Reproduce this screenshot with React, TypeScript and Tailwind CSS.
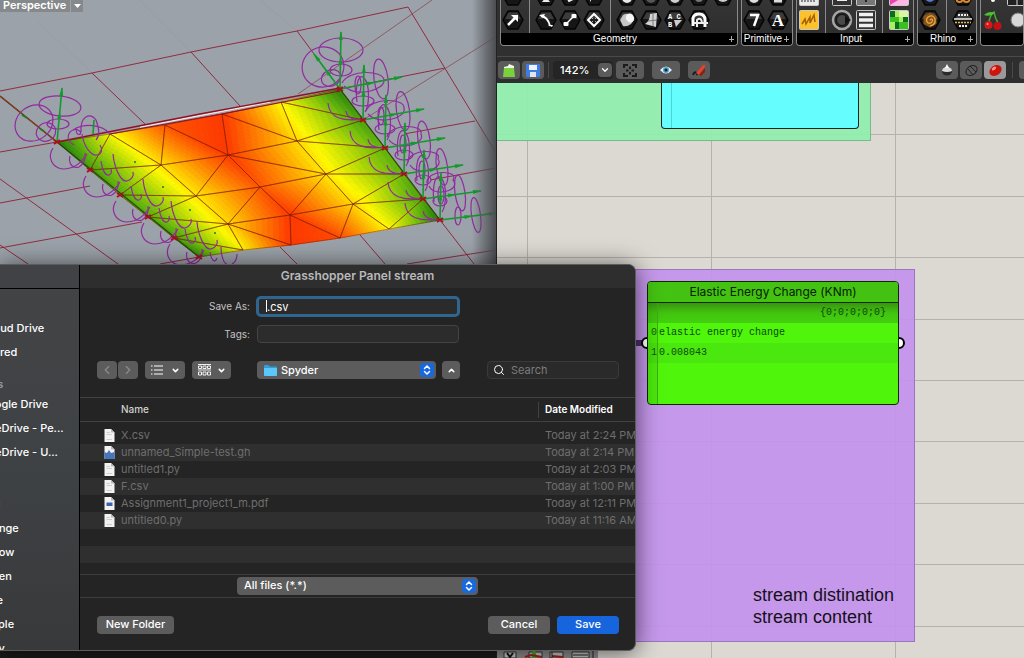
import { useState } from "react";
import type { ReactNode } from "react";
import { LuChevronDown, LuChevronLeft, LuChevronRight, LuChevronUp, LuChevronsUpDown, LuSearch } from "react-icons/lu";

type Point = [number, number];
type Vertex = { at: Point; value: number };

// Mesh vertices with their normalised energy value
const vertices: Record<string, Vertex> = {
    T0: { at: [57, 142], value: 0 },
    T1: { at: [110, 134], value: 0.48 },
    T2: { at: [165, 125], value: 0.92 },
    T3: { at: [222, 114], value: 1 },
    T4: { at: [281, 102], value: 0.5 },
    T5: { at: [340, 89], value: 0.03 },
    L1: { at: [90, 170], value: 0.1 },
    L2: { at: [120, 195], value: 0.14 },
    L3: { at: [148, 217], value: 0.14 },
    L4: { at: [174, 238], value: 0.1 },
    L5: { at: [199, 257], value: 0.05 },
    E1: { at: [363, 120], value: 0.12 },
    E2: { at: [385, 148], value: 0.18 },
    E3: { at: [404, 174], value: 0.18 },
    E4: { at: [423, 199], value: 0.12 },
    E5: { at: [440, 220], value: 0 },
    P1: { at: [161, 165], value: 0.56 },
    P2: { at: [196, 196], value: 0.54 },
    P3: { at: [228, 224], value: 0.58 },
    Q1: { at: [228, 155], value: 1 },
    Q2: { at: [260, 187], value: 0.92 },
    Q3: { at: [290, 215], value: 1 },
    R1: { at: [297, 141], value: 0.58 },
    R2: { at: [326, 174], value: 0.54 },
    R3: { at: [353, 204], value: 0.58 },
    B1: { at: [243, 250], value: 0.5 },
    B2: { at: [291, 245], value: 1 },
    B3: { at: [340, 238], value: 0.95 },
    B4: { at: [389, 229], value: 0.5 },
};

const triangles = [
    "T0 T1 L1", "T1 P1 L1", "T1 T2 P1", "T2 Q1 P1", "T2 T3 Q1", "T3 R1 Q1", "T3 T4 R1", "T4 E1 R1", "T4 T5 E1",
    "L1 P1 L2", "P1 P2 L2", "P1 Q1 P2", "Q1 Q2 P2", "Q1 R2 Q2", "Q1 R1 R2", "R1 E2 R2", "R1 E1 E2",
    "L2 P2 L3", "L3 P2 P3", "P2 Q2 P3", "Q2 Q3 P3", "Q2 R2 Q3", "R2 R3 Q3", "R2 E3 R3", "R2 E2 E3",
    "L3 P3 L4", "L4 P3 B1", "L4 B1 L5", "P3 B2 B1", "P3 Q3 B2", "Q3 B3 B2", "Q3 R3 B3", "R3 B4 B3",
    "R3 E4 B4", "R3 E3 E4", "E4 E5 B4",
].map((names) => names.split(" ").map((name) => vertices[name]));

const ramp: [number, number, number, number][] = [
    [0, 30, 122, 12],
    [0.2, 104, 184, 12],
    [0.5, 255, 250, 0],
    [0.75, 255, 148, 0],
    [1, 255, 56, 0],
];

function rampColor(value: number) {
    const v = Math.min(1, Math.max(0, value));
    const i = Math.max(1, ramp.findIndex((stop) => stop[0] >= v));
    const a = ramp[i - 1];
    const b = ramp[i];
    const t = (v - a[0]) / (b[0] - a[0]);
    const mix = (k: number) => Math.round(a[k] + (b[k] - a[k]) * t);
    return `rgb(${mix(1)},${mix(2)},${mix(3)})`;
}

const STEPS = 11;

function shadeTriangle(tri: Vertex[]) {
    const point = (i: number, j: number) => {
        const u = i / STEPS;
        const v = j / STEPS;
        const w = 1 - u - v;
        const mix = (a: number, b: number, c: number) => a * w + b * u + c * v;
        return {
            x: mix(tri[0].at[0], tri[1].at[0], tri[2].at[0]),
            y: mix(tri[0].at[1], tri[1].at[1], tri[2].at[1]),
            value: mix(tri[0].value, tri[1].value, tri[2].value),
        };
    };
    const cells: { points: string; color: string }[] = [];
    const add = (list: ReturnType<typeof point>[]) =>
        cells.push({
            points: list.map((p) => `${p.x.toFixed(1)},${p.y.toFixed(1)}`).join(" "),
            color: rampColor(list.reduce((sum, p) => sum + p.value, 0) / 3),
        });
    for (let i = 0; i < STEPS; i++) {
        for (let j = 0; j < STEPS - i; j++) {
            add([point(i, j), point(i + 1, j), point(i, j + 1)]);
            if (i + j < STEPS - 1) add([point(i + 1, j), point(i + 1, j + 1), point(i, j + 1)]);
        }
    }
    return cells;
}

const cells = triangles.flatMap(shadeTriangle);

const leftSupports: Point[] = ["T0", "L1", "L2", "L3", "L4", "L5"].map((n) => vertices[n].at);
const rightSupports: Point[] = ["T5", "E1", "E2", "E3", "E4", "E5"].map((n) => vertices[n].at);

function Arrow({ from, to }: { from: Point; to: Point }) {
    const angle = (Math.atan2(to[1] - from[1], to[0] - from[0]) * 180) / Math.PI;
    return (
        <g stroke="#149a2c" fill="#149a2c">
            <path d={`M${from[0]} ${from[1]}L${to[0]} ${to[1]}`} strokeWidth="1.6" />
            <path d="M1 0L-8 -2V2Z" stroke="none" transform={`translate(${to[0]} ${to[1]}) rotate(${angle})`} />
            <path d="M4 0L-4 -2V2Z" stroke="none" transform={`translate(${(from[0] + to[0]) / 2} ${(from[1] + to[1]) / 2}) rotate(${angle})`} />
        </g>
    );
}

function Viewport() {
    return (
        <section className="relative flex-1 overflow-hidden bg-[#9ba2a9]">
            <svg width="497" height="264" viewBox="0 0 497 264" fill="none" className="block">
                <g stroke="#939ba2" strokeWidth="0.6">
                    <path d="M38 22L92 73M140 0L191 52M260 0L297 31" />
                </g>
                <g stroke="#8d1f36" strokeWidth="0.9">
                    <path d="M0 91L92 73L191 52L297 31L408 7L496 153M92 73L146 125M191 52L240 106M297 31L340 89" />
                    <path d="M0 152L57 142M0 203L90 186M0 248L142 222M0 179L118 264M0 245L28 264M160 264L199 257" />
                    <path d="M280 247L297 264M360 235L385 264M440 220L474 264M407 264L496 250" />
                    <path d="M340 89L445 68M404 134L475 121M430 180L496 168" />
                </g>
                <path d="M298 94L432 0M363 120L497 36" stroke="#8a4a56" strokeWidth="0.8" />
                <path d="M0 96L57 142" stroke="#8c1712" strokeWidth="1.6" />

                <g strokeWidth="0.7">
                    {cells.map((cell, i) => (
                        <polygon key={i} points={cell.points} fill={cell.color} stroke={cell.color} />
                    ))}
                </g>
                <g stroke="#7a1c06" strokeWidth="0.6" strokeOpacity="0.8">
                    {triangles.map((tri, i) => (
                        <polygon key={i} points={tri.map((v) => v.at.join(",")).join(" ")} />
                    ))}
                </g>
                <path d="M57 142L199 257M340 89L440 220" stroke="#24480c" strokeWidth="1.2" />
                <path d="M140 127L270 102" stroke="#f6e4e4" strokeWidth="1.4" />
                <path d="M57 142L200 114L340 88" stroke="#8d1226" strokeWidth="1.4" />
                <path d="M110 134L222 114L340 91" stroke="#8d1226" strokeWidth="1.2" />

                {/* moments on the left supports */}
                <g stroke="#922aa0" strokeWidth="1.2">
                    <ellipse cx="60" cy="106" rx="21" ry="10" transform="rotate(6 60 106)" />
                    <ellipse cx="34" cy="123" rx="20" ry="17" transform="rotate(-38 34 123)" />
                    <ellipse cx="58" cy="124" rx="11" ry="5" />
                    <ellipse cx="46" cy="132" rx="10" ry="9" transform="rotate(-30 46 132)" />
                    <path d="M74 145C64 140 68 128 78 130C86 134 74 138 77 129M81 132C80 116 90 112 96 120C99 128 100 136 96 140M73 130C84 123 102 124 110 134" />
                    <path d="M82 134C84 148 92 156 97 155C103 154 102 148 100 145" />
                    {leftSupports.slice(0, 5).map(([x, y], i) => (
                        <g key={i} transform={`translate(${x} ${y})`}>
                            <path d="M-4 6C-10 15 -5 26 6 27C17 27 25 20 30 12" />
                            <path d="M13 14C11 22 16 27 22 25C27 22 29 16 28 11" />
                        </g>
                    ))}
                    {leftSupports.slice(1, 5).map(([x, y], i) => (
                        <g key={i} transform={`translate(${x} ${y})`}>
                            <path d="M23 -16C24 -4 30 12 37 11C42 10 44 5 43 2" />
                            <path d="M11 -9C12 -1 15 6 19 5C21 4 22 2 21 -1" />
                        </g>
                    ))}
                    <path d="M221 247C221 256 224 264 227 264M210 252C211 260 215 264 217 258M232 264C236 262 237 258 237 254" />
                </g>
                <path d="M57 142L0 96" stroke="#50641c" strokeWidth="0.8" />
                <Arrow from={[57, 142]} to={[62, 88]} />
                <path d="M93 134L94 120" stroke="#149a2c" strokeWidth="1.6" />
                <path d="M22 115L27 118M40 129L44 131M134 162h2M162 187h2M189 210h2M214 233h2" stroke="#197f22" strokeWidth="1.5" />

                {/* reactions and moments on the right supports */}
                <g stroke="#922aa0" strokeWidth="1.2">
                    <ellipse cx="341" cy="50" rx="22" ry="12" />
                    <ellipse cx="323" cy="67" rx="21" ry="20" transform="rotate(-20 323 67)" />
                    <ellipse cx="341" cy="70" rx="11" ry="6" />
                    <ellipse cx="331" cy="78" rx="10" ry="8" transform="rotate(-25 331 78)" />
                    {rightSupports.map(([x, y], i) => (
                        <g key={i} transform={`translate(${x} ${y})`}>
                            <ellipse cx={41 - i} cy={-10 + i} rx={7 - i / 2} ry={20 - i / 2} transform={`rotate(-8 ${41 - i} ${-10 + i})`} />
                            <ellipse cx="18" cy="-4" rx="3" ry="9" />
                        </g>
                    ))}
                    {rightSupports.slice(1).map(([x, y], i) => (
                        <g key={i} transform={`translate(${x} ${y})`}>
                            <ellipse cx="0" cy="-19" rx={11 - i} ry="5" />
                            <path d={`M${-21 + i * 2} -37C-14 -51 20 -50 ${21 - i * 2} -40C22 -30 -6 -22 ${-19 + i * 2} -34`} />
                            <path d="M-6 -18C-8 -32 -5 -46 0 -43C8 -36 6 -14 2 -8" />
                            <path d="M-35 -17C-34 -2 -20 2 0 -1M-17 -9C-16 -2 -8 1 0 -1" />
                        </g>
                    ))}
                </g>
                {rightSupports.map(([x, y], i) => (
                    <g key={i}>
                        <Arrow from={[x, y]} to={[x + 1, y - 57 + i * 2]} />
                        <Arrow from={[x, y]} to={[x + 62 - i, y - 12 + i]} />
                    </g>
                ))}
                <Arrow from={[340, 89]} to={[314, 54]} />

                {[...leftSupports, ...rightSupports].map(([x, y], i) => (
                    <path key={i} d={`M${x - 3} ${y - 2}l6 4m0 -4l-6 4`} stroke="#a5121a" strokeWidth="2" />
                ))}
            </svg>
            <div className="absolute inset-y-0 right-0 w-6 bg-linear-to-r from-transparent to-[#4a4c50]" />
            <div className="absolute top-0 left-0 flex h-3 items-center gap-px text-white">
                <span className="flex h-full items-center bg-[#86898c] pr-1 pb-px pl-[3px] text-[11px] leading-none font-semibold">Perspective</span>
                <button type="button" aria-label="Viewport menu" className="flex h-full w-3 items-center justify-center bg-[#86898c]">
                    <svg width="7" height="4" viewBox="0 0 7 4"><path d="M0 0H7L3.5 4Z" fill="#fff" /></svg>
                </button>
            </div>
        </section>
    );
}

function Hex({ children }: { children?: ReactNode }) {
    return (
        <svg width="24" height="24" viewBox="0 0 24 24" fill="none">
            <path d="M7 3H17L22 12L17 21H7L2 12Z" fill="#161616" stroke="#050505" strokeWidth="1.500" strokeLinejoin="round" />
            <path d="M7.500 4.500H16.500L20 11H4Z" fill="#3b3b3b" />
            {children}
        </svg>
    );
}

function Tile({ color, children }: { color: string; children?: ReactNode }) {
    return (
        <svg width="24" height="24" viewBox="0 0 24 24" fill="none">
            <rect x="2.500" y="2.500" width="19" height="19" rx="1" fill={color} stroke="#c9c9c9" />
            {children}
        </svg>
    );
}

type Column = { top: ReactNode; bottom: ReactNode } | null;

const geometryColumns: Column[] = [
    { top: <Hex />, bottom: <Hex><path d="M7 17L14 10" stroke="#fff" strokeWidth="2.500" /><path d="M10 7H17V14Z" fill="#fff" /></Hex> },
    null,
    { top: <Hex><path d="M8 18Q12 12 16 18" fill="#eee" /></Hex>, bottom: <Hex><path d="M7 8Q14 9 16 18" stroke="#fff" strokeWidth="2" /><path d="M5 7l6-1-2 4zM14 17h5l-1 2z" fill="#fff" /></Hex> },
    { top: <Hex><path d="M10 17l6-3" stroke="#eee" strokeWidth="3" /></Hex>, bottom: <Hex><path d="M8 16L16 8" stroke="#fff" strokeWidth="1.500" /><rect x="5.500" y="14" width="5" height="4" rx="1" fill="#fff" /><rect x="13.500" y="6" width="5" height="4" rx="1" fill="#fff" /></Hex> },
    { top: <Hex><path d="M8 18V13h3z" fill="#eee" /></Hex>, bottom: <Hex><path d="M12 6L18 12L12 18L6 12Z" stroke="#fff" strokeWidth="2" /><path d="M9 15L15 9M9 9L15 15" stroke="#ddd" /><rect x="10.500" y="10.500" width="3" height="3" fill="#222" /></Hex> },
    null,
    { top: <Hex><circle cx="12" cy="14" r="5" fill="#e8e8e8" /></Hex>, bottom: <Hex><path d="M5 12L8 7Q11 5 14 6Q19 8 19 12L16 16Q12 19 8 18Z" fill="#c5c5c5" /><ellipse cx="15" cy="10" rx="4" ry="4.500" fill="#f5f5f5" transform="rotate(-30 15 10)" /></Hex> },
    { top: <Hex><circle cx="12" cy="14" r="5" fill="#555" /></Hex>, bottom: <Hex><path d="M11 6L18 5L17 19L6 16Q11 13 11 6Z" fill="#d2d2d2" /><path d="M14 6V18M9 13L18 12" stroke="#777" /></Hex> },
    { top: <Hex><circle cx="12" cy="14" r="5" fill="#d0d0d0" /></Hex>, bottom: <Hex><text x="5" y="11" fontSize="7" fontWeight="700" fill="#fff" className="font-['Liberation_Mono']">A C</text><text x="5" y="19" fontSize="7" fontWeight="700" fill="#fff" className="font-['Liberation_Mono']">B</text><path d="M11 12H19L13 19Z" fill="#ccc" /></Hex> },
    { top: <Hex><circle cx="12" cy="14" r="4" fill="#777" /></Hex>, bottom: <Hex><path d="M6 18V10Q7 6 12 6Q18 6 18 12V19" stroke="#fff" strokeWidth="3" /><path d="M10 19V12Q14 9 15 14M7 15H21" stroke="#eee" strokeWidth="2" /></Hex> },
    { top: <Hex><circle cx="12" cy="12" r="6" fill="#ccc" /></Hex>, bottom: null },
];

const primitiveColumns: Column[] = [
    { top: <Hex><circle cx="12" cy="14" r="5" fill="#ddd" /></Hex>, bottom: <Hex><path d="M8 7H16L12 18" stroke="#fff" strokeWidth="2.500" /></Hex> },
    { top: <Hex><path d="M8 17h8" stroke="#ddd" strokeWidth="3" /></Hex>, bottom: <Hex><text x="12" y="18" textAnchor="middle" fontSize="17" fontWeight="700" fill="#fff" className="font-['Liberation_Serif']">A</text></Hex> },
];

const inputColumns: Column[] = [
    { top: <Tile color="#eaeaea"><path d="M5 18V14M8 18V15M11 18V14M14 18V15M17 18V14" stroke="#222" /></Tile>, bottom: <Tile color="#fbc22c"><path d="M5 16L8 11L9 16L13 9L13 15L17 7L18 14" stroke="#a65c00" strokeWidth="1.500" /></Tile> },
    null,
    { top: <Tile color="#333"><rect x="7" y="8" width="10" height="9" fill="#eee" /></Tile>, bottom: <svg width="24" height="24" viewBox="0 0 24 24" fill="none"><circle cx="12" cy="12" r="9" fill="#222" stroke="#a6a6a6" strokeWidth="2.500" /><circle cx="12" cy="12" r="5.500" fill="#4a4a4a" stroke="#111" /><path d="M15 8l6 4-6 4z" fill="#111" /></svg> },
    { top: <Tile color="#777"><path d="M5 8Q12 8 12 18" stroke="#222" strokeWidth="2" /></Tile>, bottom: <Tile color="#333"><path d="M5 6.500H19M5 12H19M5 17.500H19" stroke="#f1f1f1" strokeWidth="3.500" /></Tile> },
    null,
    { top: <Tile color="#ec42b0"><path d="M3 21L21 10V21Z" fill="#ffb7e4" /></Tile>, bottom: <Tile color="#3bbf22"><path d="M3 3h5v6H3zM16 9h5v5h-5zM8 14h4v7H8z" fill="#0e6d1c" /><path d="M8 3h4v6H8zM3 14h5v7H3zM12 9h4v5h-4z" fill="#a9ee63" /><path d="M12 3h9v6h-9z" fill="#d9f7a2" /></Tile> },
];

const rhinoColumns: Column[] = [
    { top: <Hex><circle cx="12" cy="13" r="4" stroke="#5a78c8" strokeWidth="2" /></Hex>, bottom: <Hex><path d="M12 4.500L18.500 8V16L12 19.500L5.500 16V8Z" fill="#8a5418" /><path d="M12 12Q14 10 14.500 12Q14 16 10 15Q7 12 10 9Q15 6 17 11Q18 17 12 18" stroke="#efa844" strokeWidth="1.200" /></Hex> },
    null,
    { top: <Hex><circle cx="8.500" cy="15" r="3" stroke="#d98a2b" strokeWidth="2" /><circle cx="15.500" cy="15" r="3" stroke="#d98a2b" strokeWidth="2" /></Hex>, bottom: <Hex><path d="M7 7H17M8 18H16" stroke="#eee" strokeWidth="2" strokeDasharray="2 1" /><path d="M3 11H21" stroke="#eee" strokeWidth="1.500" /><path d="M4 14.500H20" stroke="#e0b84a" strokeWidth="1.500" strokeDasharray="2 1" /></Hex> },
];

const extraColumns: Column[] = [
    { top: <svg width="24" height="24" viewBox="0 0 24 24"><circle cx="12" cy="16" r="2" fill="#fff" /></svg>, bottom: <svg width="24" height="24" viewBox="0 0 24 24" fill="none"><path d="M8 14Q9 7 13 4Q14 10 17 15" stroke="#49b02a" strokeWidth="1.500" /><path d="M3 7Q8 2 14 5Q9 9 3 7Z" fill="#4fc02e" /><circle cx="7.500" cy="17" r="4" fill="#d8171c" /><circle cx="16.500" cy="18" r="4" fill="#c21016" /><circle cx="6.500" cy="16" r="1" fill="#ff9c9c" /></svg> },
    { top: <Tile color="#222"><path d="M12 3V21M3 14H21" stroke="#ddd" /></Tile>, bottom: <svg width="24" height="24" viewBox="0 0 24 24"><circle cx="13" cy="12" r="7" fill="#d7d7d7" stroke="#777" /></svg> },
];

function ToolGroup({ label, columns, className }: { label: string; columns: Column[]; className: string }) {
    return (
        <div className={`flex flex-col overflow-hidden rounded-b border border-t-0 border-[#8a8a8a] bg-linear-to-b from-[#383838] to-[#2c2c2c] ${className}`}>
            <div className="flex h-[49px]">
                {columns.map((column, i) =>
                    column ? (
                        <div key={i} className="flex w-6 shrink-0 flex-col">
                            <span className="h-6">{column.top}</span>
                            <span className="h-6">{column.bottom}</span>
                        </div>
                    ) : (
                        <span key={i} className="flex h-full w-[9px] shrink-0 justify-center">
                            <span className="h-full w-px bg-[#8a8a8a]" />
                        </span>
                    )
                )}
            </div>
            <div className="relative flex h-3 items-center justify-center bg-black pr-2 font-['Liberation_Sans'] text-[10px] leading-none text-white">
                {label}
                {label && (
                    <svg width="7" height="7" viewBox="0 0 7 7" className="absolute right-0.5 bottom-0.5">
                        <path d="M3.500 0V6M1 3.500H6" stroke="#aaa" />
                    </svg>
                )}
            </div>
        </div>
    );
}

function ToolButton({ label, children, className = "w-[22px]" }: { label: string; children?: ReactNode; className?: string }) {
    return (
        <button type="button" aria-label={label} className={`flex h-[18px] shrink-0 items-center justify-center rounded bg-[#5b5b5b] ${className}`}>
            {children}
        </button>
    );
}

function CanvasToolbar() {
    const [zoom, setZoom] = useState("142%");

    return (
        <div className="flex h-[27px] items-center border-t border-[#4a4a4a] bg-[#2e2e2e] pl-px">
            <ToolButton label="Open">
                <svg width="12" height="13" viewBox="0 0 12 13"><path d="M1 3L5 2L6 0L11 2V12H1Z" fill="#f1f6e8" /><path d="M1 4H11L12 13H0Z" fill="#7bd13c" /></svg>
            </ToolButton>
            <ToolButton label="Save file" className="ml-0.5 w-[22px]">
                <svg width="14" height="13" viewBox="0 0 14 13"><rect width="14" height="13" rx="1" fill="#3f7de0" /><rect x="3" y="1" width="8" height="5" fill="#eef3fc" /><rect x="4" y="8" width="6" height="5" fill="#dfe6f2" /></svg>
            </ToolButton>
            <span className="mx-1 h-4 w-px bg-[#484848]" />
            <div className="relative flex h-[18px] w-[60px] items-center">
                <select aria-label="Zoom" value={zoom} onChange={(e) => setZoom(e.target.value)} className="h-full w-full appearance-none rounded bg-[#252525] pl-[7px] text-[11px] leading-none font-medium text-white">
                    <option>142%</option>
                    <option>100%</option>
                </select>
                <span className="pointer-events-none absolute right-px flex h-3.5 w-3.5 items-center justify-center rounded-sm bg-[#5b5b5b] text-white">
                    <LuChevronDown size={10} strokeWidth={3} />
                </span>
            </div>
            <ToolButton label="Zoom extents" className="ml-[3px] w-7">
                <svg width="14" height="13" viewBox="0 0 14 13" fill="none"><path d="M1 4V1H5M9 1H13V4M13 9V12H9M5 12H1V9M7 2.500V5M7 8V10.500M3 6.500H5.500M8.500 6.500H11" stroke="#1b1b1b" strokeWidth="2" /></svg>
            </ToolButton>
            <ToolButton label="Preview" className="ml-2 w-7">
                <svg width="12" height="8" viewBox="0 0 12 8"><path d="M0 4Q6 -3 12 4Q6 11 0 4Z" fill="#e6f3fb" /><circle cx="6" cy="4" r="3" fill="#4f9fd0" /><circle cx="6" cy="4" r="1.500" fill="#10202c" /></svg>
            </ToolButton>
            <ToolButton label="Sketch" className="ml-2 w-[22px]">
                <svg width="14" height="13" viewBox="0 0 14 13" fill="none"><path d="M1 11Q3 6 5 10L7 8" stroke="#1d1d1d" strokeWidth="2" /><path d="M4 9L11 1Q14 0 13 3L7 11Z" fill="#e2432b" /><path d="M7 11L13 4L13 8L9 12Z" fill="#8e1d12" /></svg>
            </ToolButton>
            <div className="ml-auto flex items-center gap-0.5">
                <ToolButton label="No preview">
                    <svg width="12" height="12" viewBox="0 0 12 12"><ellipse cx="6" cy="7.500" rx="5" ry="4" fill="#2a2a2a" /><path d="M1 7A5 4 0 0 1 11 7Q6 9 1 7Z" fill="#ddd" /><path d="M6 0L8 4H4Z" fill="#fff" /></svg>
                </ToolButton>
                <ToolButton label="Wireframe preview">
                    <svg width="13" height="13" viewBox="0 0 13 13" fill="none" stroke="#222"><ellipse cx="6.500" cy="6.500" rx="6" ry="4.500" transform="rotate(-35 6.500 6.500)" /><path d="M3 5L8 11M5 2L11 8" /></svg>
                </ToolButton>
                <button type="button" aria-label="Shaded preview" className="flex h-[18px] w-[22px] items-center justify-center rounded bg-[#9a9a9a]">
                    <svg width="13" height="13" viewBox="0 0 13 13"><ellipse cx="6.500" cy="6.500" rx="6.500" ry="5" fill="#c9140f" transform="rotate(-35 6.500 6.500)" /><ellipse cx="5" cy="4.500" rx="2.500" ry="1.500" fill="#ff8f86" transform="rotate(-35 5 4.500)" /></svg>
                </button>
                <span className="mx-1 h-4 w-px bg-[#484848]" />
                <span className="h-[18px] w-[5px] rounded-l bg-[#5b5b5b]" />
            </div>
        </div>
    );
}

const gridX = [31, 215, 399];
const gridY = [51, 113, 174, 236, 297, 358, 420, 481, 543];

function Canvas() {
    return (
        <div className="relative flex-1 overflow-hidden bg-[#dcd8d2]">
            <svg width="100%" height="100%" className="absolute inset-0" stroke="#b5b1ac" strokeWidth="1">
                {gridX.map((x) => <line key={x} x1={x - 0.5} x2={x - 0.5} y1="0" y2="100%" />)}
                {gridY.map((y) => <line key={y} x1="0" x2="100%" y1={y + 0.5} y2={y + 0.5} />)}
            </svg>

            <div className="absolute top-0 left-0 h-[58px] w-[374px] border-r border-b border-[#76b98c] bg-[#90eeae]/95" />
            <div className="absolute top-0 left-[164px] h-[46px] w-[198px] rounded-b border border-t-0 border-[#123] bg-[#66fdfe] pl-[9px]">
                <div className="h-full w-px bg-[#4bd3d8]" />
            </div>

            <div className="absolute top-[186px] left-[100px] h-[373px] w-[318px] border border-[#9a76bf] bg-[#c293ed]/92" />
            <div className="absolute top-[257px] left-[120px] h-1.5 w-8 bg-[#4c3263]" />
            <span className="absolute top-[254px] left-[144px] h-3 w-3 rounded-full border-2 border-black bg-white" />
            <span className="absolute top-[254px] left-[396px] h-3 w-3 rounded-full border-2 border-black bg-white" />

            <article className="absolute top-[198px] left-[150px] flex h-[124px] w-[252px] flex-col overflow-hidden rounded border border-[#0d2a05] bg-[#50f50c] font-['Liberation_Mono'] text-[10px] text-[#0c4a06]">
                <h2 className="flex h-[21px] shrink-0 items-center justify-center border-b border-[#0d2a05] bg-[#44c212] font-['Inter'] text-xs leading-none text-[#061c02]">
                    Elastic Energy Change (KNm)
                </h2>
                <div className="relative flex-1">
                    <p className="h-5 bg-linear-to-b from-[#38960f] via-[#41c40f] to-[#43d010] pr-3 text-right leading-5">{"{0;0;0;0;0}"}</p>
                    <p className="h-5 pl-[3px] leading-5"><span className="mr-0.5">0</span>elastic energy change</p>
                    <p className="h-5 bg-[#4be80f] pl-[3px] leading-5"><span className="mr-0.5">1</span>0.008043</p>
                    <div className="absolute inset-y-0 left-0 w-2.5 border-r border-[#3fae14] bg-[#2f9a0c]/15" />
                </div>
            </article>

            <p className="absolute top-[501px] left-[256px] font-['Liberation_Sans'] text-lg leading-[22px] text-[#151018]">
                stream distination
                <br />
                stream content
            </p>

            <div className="absolute bottom-0 left-0 flex h-2 w-[101px] items-end border-t border-[#555] bg-[#8f8f8f]">
                <svg width="101" height="7" viewBox="0 0 101 7" fill="none">
                    <path d="M7 1H19V7H7ZM32 1H45V7H32ZM53 1H66V7H53ZM75 1H92V7H75Z" fill="#c8c8c8" stroke="#333" />
                    <path d="M10 2L13 6L16 2" stroke="#111" strokeWidth="2" />
                    <path d="M35 0h4v7h-4z" fill="#3fb51d" />
                    <path d="M28 6L34 4L45 6M55 5L66 6" stroke="#a3241c" strokeWidth="2" />
                    <path d="M55 1V7M76 4H91M96 0V7" stroke="#222" />
                </svg>
            </div>
        </div>
    );
}

const places = ["iCloud Drive", "Shared"];
const locations = ["Google Drive", "OneDrive - Pe...", "OneDrive - U..."];
const tags = ["Red", "Orange", "Yellow", "Green", "Blue", "Purple", "Gray"];

function SidebarList({ items, className = "" }: { items: string[]; className?: string }) {
    return (
        <ul className={className}>
            {items.map((item) => (
                <li key={item} className="h-6 leading-6">{item}</li>
            ))}
        </ul>
    );
}

type FileKind = "text" | "gh" | "pdf";

const files: { name: string; date: string; kind: FileKind }[] = [
    { name: "X.csv", date: "Today at 2:24 PM", kind: "text" },
    { name: "unnamed_Simple-test.gh", date: "Today at 2:14 PM", kind: "gh" },
    { name: "untitled1.py", date: "Today at 2:03 PM", kind: "text" },
    { name: "F.csv", date: "Today at 1:00 PM", kind: "text" },
    { name: "Assignment1_project1_m.pdf", date: "Today at 12:11 PM", kind: "pdf" },
    { name: "untitled0.py", date: "Today at 11:16 AM", kind: "text" },
];

function FileIcon({ kind }: { kind: FileKind }) {
    return (
        <svg width="11" height="13" viewBox="0 0 11 13" className="block">
            <path d="M0.500 0H7L10.500 3.500V13H0.500Z" fill="#f2f2f2" />
            <path d="M7 0V3.500H10.500Z" fill="#b9b9b9" />
            {kind === "text" && <path d="M2.500 3.500H6M2.500 5.500H8M2.500 10.500H8" stroke="#c4c4c4" strokeWidth="0.800" />}
            {kind === "gh" && <path d="M0.500 6L3 7L5 4L7 7L10.500 6V13H0.500Z" fill="#4677bd" />}
            {kind === "pdf" && <path d="M2.500 5.500H8.500V9H2.500Z" fill="#3f62a8" />}
        </svg>
    );
}

function Stepper() {
    return (
        <span className="pointer-events-none absolute top-1/2 right-0.5 flex h-3.5 w-3.5 -translate-y-1/2 items-center justify-center rounded-[3px] bg-[#1769dd] text-white">
            <LuChevronsUpDown size={12} strokeWidth={3} />
        </span>
    );
}

const greyButton = "flex h-[18px] shrink-0 items-center justify-center rounded bg-[#5c5c5c]";

function SaveDialog() {
    const [fileName, setFileName] = useState(".csv");
    const [tagText, setTagText] = useState("");
    const [query, setQuery] = useState("");

    return (
        <div role="dialog" aria-label="Grasshopper Panel stream" className="absolute top-[264px] left-0 flex w-[636px] overflow-hidden rounded-r-lg border-t border-r border-b border-[#5c5c5c] bg-[#242424] text-[11px] text-white shadow-[0_2px_24px_rgba(0,0,0,0.6)]">
            <aside className="relative w-20 shrink-0 border-r border-black bg-linear-to-b from-[#434446] via-[#3f4245] to-[#38393b] font-medium">
                <div className="h-6 border-b border-black bg-[#414245]" />
                <div className="absolute inset-x-0 top-[51px] bottom-0 overflow-hidden">
                    <div className="-ml-5 whitespace-nowrap">
                        <SidebarList items={places} />
                        <h3 className="mt-3 -ml-6 h-4 text-[10px] leading-4 font-semibold text-[#97999c]">Locations</h3>
                        <SidebarList items={locations} />
                        <SidebarList items={tags} className="mt-7" />
                    </div>
                </div>
            </aside>

            <div className="min-w-0 flex-1">
                <h1 className="h-[23px] bg-[#2e2e2e] text-center text-xs leading-[22px] font-semibold text-[#b9b9b9]">Grasshopper Panel stream</h1>

                <div className="grid grid-cols-[170px_204px] items-center gap-x-[6px] pt-2">
                    <label htmlFor="save-as" className="text-right text-[10px] text-[#c2c2c2]">Save As:</label>
                    <div className="relative">
                        <input id="save-as" value={fileName} onChange={(e) => setFileName(e.target.value)} className="block h-[21px] w-full rounded-[5px] border-[3px] border-[#2f6690] bg-[#2b2b2b] px-2 text-[11px] leading-none text-white outline-none" />
                        <span className="absolute top-1 left-2.5 h-3 w-px bg-white" />
                    </div>
                    <label htmlFor="tags" className="mt-2 text-right text-[10px] text-[#c2c2c2]">Tags:</label>
                    <input id="tags" value={tagText} onChange={(e) => setTagText(e.target.value)} className="mx-px mt-2 block h-[18px] rounded border border-[#444] bg-[#2c2c2c] px-2 outline-none" />
                </div>

                <div className="mt-[18px] flex items-center pl-[17px]">
                    <button type="button" aria-label="Back" className={`${greyButton} w-5 text-[#8c8c8c]`}><LuChevronLeft size={14} /></button>
                    <button type="button" aria-label="Forward" className={`${greyButton} ml-px w-5 text-[#8c8c8c]`}><LuChevronRight size={14} /></button>
                    <button type="button" aria-label="List view" className={`${greyButton} ml-[7px] w-10 gap-2`}>
                        <svg width="12" height="10" viewBox="0 0 12 10" stroke="#fff"><path d="M3 1H12M3 5H12M3 9H12" /><path d="M0 1H1.500M0 5H1.500M0 9H1.500" /></svg>
                        <LuChevronDown size={9} strokeWidth={4} />
                    </button>
                    <button type="button" aria-label="Group items" className={`${greyButton} ml-[7px] w-[39px] gap-1.5`}>
                        <svg width="13" height="12" viewBox="0 0 13 12" fill="none" stroke="#fff" strokeWidth="0.900">
                            <path d="M0 0.500H13M0 6H13" />
                            <path d="M0.500 2h3v2.500h-3zM5 2h3v2.500h-3zM9.500 2h3v2.500h-3zM0.500 8h3v3h-3zM5 8h3v3h-3zM9.500 8h3v3h-3z" />
                        </svg>
                        <LuChevronDown size={9} strokeWidth={4} />
                    </button>
                    <div className="relative ml-[26px] h-[18px] w-[179px]">
                        <select aria-label="Folder" className="block h-full w-full appearance-none rounded bg-[#5c5c5c] pl-6 text-[11px] leading-none font-medium text-white">
                            <option>Spyder</option>
                        </select>
                        <svg width="13" height="11" viewBox="0 0 13 11" className="absolute top-1 left-[7px]">
                            <path d="M0 1Q0 0 1 0H4.500L6 1.500H12Q13 1.500 13 2.500V10Q13 11 12 11H1Q0 11 0 10Z" fill="#2f9fd6" />
                            <path d="M0 3H13V10Q13 11 12 11H1Q0 11 0 10Z" fill="#5ac8fa" />
                        </svg>
                        <Stepper />
                    </div>
                    <button type="button" aria-label="Collapse" className={`${greyButton} ml-1.5 w-[18px]`}><LuChevronUp size={9} strokeWidth={4} /></button>
                    <label className="ml-[27px] flex h-[18px] w-[132px] items-center gap-1.5 rounded border border-[#3a3a3a] bg-[#2a2a2a] pl-[5px]">
                        <LuSearch size={12} className="shrink-0" />
                        <input type="search" aria-label="Search" placeholder="Search" value={query} onChange={(e) => setQuery(e.target.value)} className="w-full min-w-0 bg-transparent text-[11px] leading-none outline-none placeholder:text-[#7c7c7c]" />
                    </label>
                </div>

                <table className="mt-[18px] w-full table-fixed border-collapse text-left whitespace-nowrap">
                    <thead>
                        <tr className="h-6 border-y border-[#414141] text-[10px]">
                            <th aria-label="Kind" className="w-[35px] p-0" />
                            <th className="p-0 pl-1.5 font-medium text-[#d0d0d0]">Name</th>
                            <th className="w-[97px] p-0 font-semibold"><div className="flex h-4 items-center border-l border-[#414141] pl-1.5">Date Modified</div></th>
                        </tr>
                    </thead>
                    <tbody className="text-[#6e6e6e]">
                        <tr className="h-[5px]"><td colSpan={3} className="p-0" /></tr>
                        {files.map((file) => (
                            <tr key={file.name} className="h-[17px] leading-[17px] odd:bg-[#2f2f2f]">
                                <td className="p-0"><div className="flex justify-end"><FileIcon kind={file.kind} /></div></td>
                                <td className="p-0 pl-1.5">{file.name}</td>
                                <td className="overflow-hidden p-0 pl-[7px]">{file.date}</td>
                            </tr>
                        ))}
                        <tr className="h-[17px]"><td colSpan={3} className="p-0" /></tr>
                        <tr className="h-[17px] bg-[#2f2f2f]"><td colSpan={3} className="p-0" /></tr>
                    </tbody>
                </table>

                <div className="mt-[11px] flex h-6 items-center border-y border-[#3d3d3d] pl-[157px]">
                    <div className="relative h-[18px] w-[241px]">
                        <select aria-label="File type" className="block h-full w-full appearance-none rounded bg-[#5c5c5c] pl-[7px] text-[11px] leading-none font-medium text-white">
                            <option>All files (*.*)</option>
                        </select>
                        <Stepper />
                    </div>
                </div>

                <div className="flex items-center gap-[7px] pt-[18px] pr-4 pb-4 pl-[17px] font-medium">
                    <button type="button" className={`${greyButton} mr-auto w-[77px]`}>New Folder</button>
                    <button type="button" className={`${greyButton} w-[62px]`}>Cancel</button>
                    <button type="button" className="flex h-[18px] w-[62px] items-center justify-center rounded bg-[#1765dc]">Save</button>
                </div>
            </div>
        </div>
    );
}

export default function App() {
    return (
        <main className="relative flex h-screen overflow-hidden bg-[#1b1b1b] font-['Inter',sans-serif]">
            <div className="flex w-[496px] shrink-0 flex-col">
                <Viewport />
                <div className="h-2 bg-[#1b1b1b]" />
            </div>

            <div className="flex min-w-0 flex-1 flex-col border-l border-[#222] bg-[#303030]">
                <div className="-mt-4 flex h-[72px] shrink-0 items-start gap-[3px] overflow-hidden pl-[3px]">
                    <ToolGroup label="Geometry" columns={geometryColumns} className="w-[238px] shrink-0" />
                    <ToolGroup label="Primitive" columns={primitiveColumns} className="w-[52px] shrink-0" />
                    <ToolGroup label="Input" columns={inputColumns} className="w-[118px] shrink-0" />
                    <ToolGroup label="Rhino" columns={rhinoColumns} className="w-[60px] shrink-0" />
                    <ToolGroup label="" columns={extraColumns} className="min-w-0 flex-1" />
                </div>
                <CanvasToolbar />
                <Canvas />
            </div>

            <SaveDialog />
        </main>
    );
}
